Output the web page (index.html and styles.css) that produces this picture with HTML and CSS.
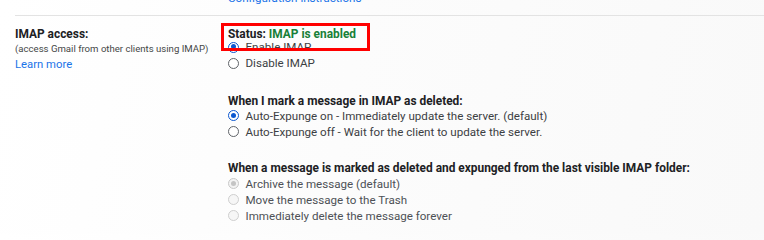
FILE: index.html
```html
<!DOCTYPE html>
<html lang="en">
<head>
<meta charset="utf-8">
<title>IMAP access settings</title>
<link rel="stylesheet" href="styles.css">
</head>
<body>
<div class="page">
  <div class="prev-row">
    <a class="link" href="#">Configuration instructions</a>
  </div>
  <div class="setting">
    <div class="label-col">
      <div class="label">IMAP access:</div>
      <div class="sub">(access Gmail from other clients using IMAP)</div>
      <a class="link learn" href="#">Learn more</a>
    </div>
    <div class="value-col">
      <div class="status-wrap">
        <div class="status">Status: <span class="ok">IMAP is enabled</span></div>
        <div class="highlight"></div>
      </div>
      <div class="opts opts-status">
        <div class="opt"><span class="radio checked"></span>Enable IMAP</div>
        <div class="opt"><span class="radio"></span>Disable IMAP</div>
      </div>

      <div class="heading h2">When I mark a message in IMAP as deleted:</div>
      <div class="opts opts-h2">
        <div class="opt"><span class="radio checked"></span>Auto-Expunge on - Immediately update the server. (default)</div>
        <div class="opt"><span class="radio"></span>Auto-Expunge off - Wait for the client to update the server.</div>
      </div>

      <div class="heading h3">When a message is marked as deleted and expunged from the last visible IMAP folder:</div>
      <div class="opts">
        <div class="opt disabled"><span class="radio checked"></span>Archive the message (default)</div>
        <div class="opt disabled"><span class="radio"></span>Move the message to the Trash</div>
        <div class="opt disabled"><span class="radio"></span>Immediately delete the message forever</div>
      </div>
    </div>
  </div>
</div>
</body>
</html>
```
FILE: styles.css
```css
html, body {
  margin: 0;
  padding: 0;
}
body {
  background: linear-gradient(100deg, #ffffff 0%, #fcfcfc 45%, #f9f9f9 100%);
  font-family: Roboto, "Liberation Sans", Arial, sans-serif;
  font-size: 11.6px;
  line-height: 16px;
  color: #3c4043;
  width: 764px;
  height: 234px;
  overflow: hidden;
}
.page {
  padding-left: 15px;
  margin-top: -10px;
}
.link {
  color: #1a73e8;
  text-decoration: none;
}
.prev-row {
  padding-left: 213px;
  height: 16px;
  padding-bottom: 9px;
  border-bottom: 1px solid #e3e3e3;
}
.setting {
  display: flex;
  padding-top: 9.5px;
}
.label-col {
  width: 213px;
  flex: none;
}
.label {
  font-weight: 700;
  font-size: 11.9px;
  color: #202124;
}
.sub {
  font-size: 9.6px;
  line-height: 14px;
  color: #444746;
}
.learn {
  display: block;
  margin-top: 1px;
  font-size: 11.3px;
}
.value-col {
  flex: 1;
}
.status-wrap {
  position: relative;
}
.status {
  font-weight: 700;
  font-size: 11.9px;
  color: #202124;
}
.ok {
  color: #188038;
}
.highlight {
  position: absolute;
  left: -7px;
  top: -2.5px;
  width: 143px;
  height: 22px;
  border: 3px solid #ff0000;
  z-index: 2;
}
.opts-status {
  margin-top: -2.5px;
}
.heading {
  font-weight: 700;
  font-size: 11.9px;
  color: #202124;
}
.h2 {
  margin-top: 21.5px;
}
.opts-h2 {
  margin-top: -1px;
}
.h3 {
  margin-top: 20px;
}
.opt {
  display: flex;
  align-items: center;
  height: 16px;
  white-space: nowrap;
}
.radio {
  flex: none;
  box-sizing: border-box;
  width: 11px;
  height: 11px;
  border: 1px solid #5f6368;
  border-radius: 50%;
  margin-left: 0;
  margin-right: 6.5px;
  position: relative;
  top: 0;
  background: #fff;
}
.radio.checked {
  border: 1.5px solid #0b57d0;
}
.radio.checked::after {
  content: "";
  position: absolute;
  left: 1.5px;
  top: 1.5px;
  width: 5px;
  height: 5px;
  border-radius: 50%;
  background: #0b57d0;
}
.disabled {
  color: #4d5156;
}
.disabled .radio {
  border-color: #cfcfcf;
  background: #f6f6f6;
}
.disabled .radio.checked {
  border: 1px solid #c8c8c8;
  background: #f3f3f3;
}
.disabled .radio.checked::after {
  left: 2px;
  top: 2px;
  background: #c4c4c4;
}
```
